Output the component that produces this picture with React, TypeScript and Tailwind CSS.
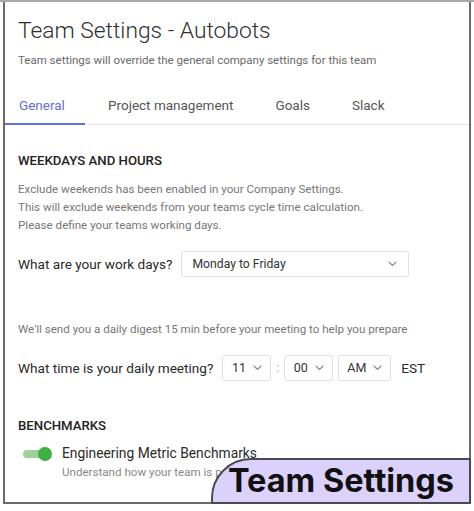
import React from "react";

const Chevron = ({ className = "" }: { className?: string }) => (
  <svg width="9" height="6" viewBox="0 0 9 6" className={className} fill="none">
    <path d="M1 1l3.5 3.5L8 1" stroke="#8a8a8a" strokeWidth="1.1" strokeLinecap="round" strokeLinejoin="round" />
  </svg>
);

const SmallSelect = ({ value, width }: { value: string; width: string }) => (
  <div className={`flex h-[26px] items-center justify-center gap-[7px] rounded-[3px] border border-[#e0e0e0] bg-white text-[12.5px] text-[#333] ${width}`}>
    <span>{value}</span>
    <Chevron />
  </div>
);

export default function App() {
  return (
    <div className="relative h-[511px] w-[474px] overflow-hidden bg-white" style={{ fontFamily: "Roboto, 'Liberation Sans', sans-serif" }}>
      <div className="h-[2px] w-full bg-[#a9a9a9]" />
      <div className="ml-[3px] h-[502px] w-[468px] border-x-2 border-b-2 border-[#6b6b6b] bg-white">
        <div className="px-[13px] pt-[14px]">
          <h1 className="text-[22.8px] font-light leading-[30px] text-[#2f2f2f]">Team Settings - Autobots</h1>
          <p className="mt-[7px] text-[11.5px] leading-[14px] text-[#6a6a6a]">Team settings will override the general company settings for this team</p>
        </div>
        <div className="mt-[28px] flex border-b border-[#e6e6e6] text-[13.5px] leading-[20px]">
          <div className="-mb-px w-[80px] border-b-2 border-[#6470cf] pb-[8px] pl-[14px] text-[#6470cf]">General</div>
          <div className="ml-[23px] pb-[8px] text-[#555]">Project management</div>
          <div className="ml-[42px] pb-[8px] text-[#555]">Goals</div>
          <div className="ml-[42px] pb-[8px] text-[#555]">Slack</div>
        </div>
        <div className="px-[13px]">
          <h2 className="mt-[28px] text-[13.2px] font-medium leading-[16px] text-[#222]">WEEKDAYS AND HOURS</h2>
          <div className="mt-[11px] text-[11.6px] leading-[18px] text-[#777]">
            <p>Exclude weekends has been enabled in your Company Settings.</p>
            <p>This will exclude weekends from your teams cycle time calculation.</p>
            <p>Please define your teams working days.</p>
          </div>
          <div className="mt-[17px] flex items-center">
            <span className="text-[13.6px] text-[#2a2a2a]">What are your work days?</span>
            <div className="ml-[9px] flex h-[26px] w-[228px] items-center justify-between rounded-[3px] border border-[#e0e0e0] pl-[10px] pr-[11px] text-[12.2px] text-[#333]">
              <span>Monday to Friday</span>
              <Chevron />
            </div>
          </div>
          <p className="mt-[44px] text-[11.6px] leading-[16px] text-[#777]">We'll send you a daily digest 15 min before your meeting to help you prepare</p>
          <div className="mt-[18px] flex items-center">
            <span className="text-[13.6px] text-[#2a2a2a]">What time is your daily meeting?</span>
            <div className="ml-[9px]"><SmallSelect value="11" width="w-[49px]" /></div>
            <span className="mx-[5px] text-[12px] text-[#aaa]">:</span>
            <SmallSelect value="00" width="w-[49px]" />
            <div className="ml-[5px]"><SmallSelect value="AM" width="w-[53px]" /></div>
            <span className="ml-[10px] text-[13.6px] text-[#2a2a2a]">EST</span>
          </div>
          <h2 className="mt-[37px] text-[13.2px] font-medium leading-[16px] text-[#222]">BENCHMARKS</h2>
          <div className="mt-[10px] flex">
            <div className="relative mt-[4px] ml-[5px] h-[12px] w-[26px]">
              <div className="absolute left-0 top-[2px] h-[8px] w-[22px] rounded-full bg-[#9ed19c]" />
              <div className="absolute right-[-3px] top-[-1px] h-[14px] w-[14px] rounded-full bg-[#3fae43]" />
            </div>
            <div className="ml-[13px]">
              <div className="text-[13.8px] leading-[18px] text-[#2a2a2a]">Engineering Metric Benchmarks</div>
              <div className="mt-[2px] text-[11.6px] leading-[16px] text-[#888]">Understand how your team is performing</div>
            </div>
          </div>
        </div>
      </div>
      <div
        className="absolute left-[211px] top-[458px] flex h-[46px] w-[260px] items-center justify-center rounded-tl-[40px] border-2 border-[#4a4a55] bg-[#dcd1fb] text-[32.5px] font-bold leading-none text-[#111]"
        style={{ fontFamily: "Inter, 'Liberation Sans', sans-serif" }}
      >
        Team Settings
      </div>
    </div>
  );
}
